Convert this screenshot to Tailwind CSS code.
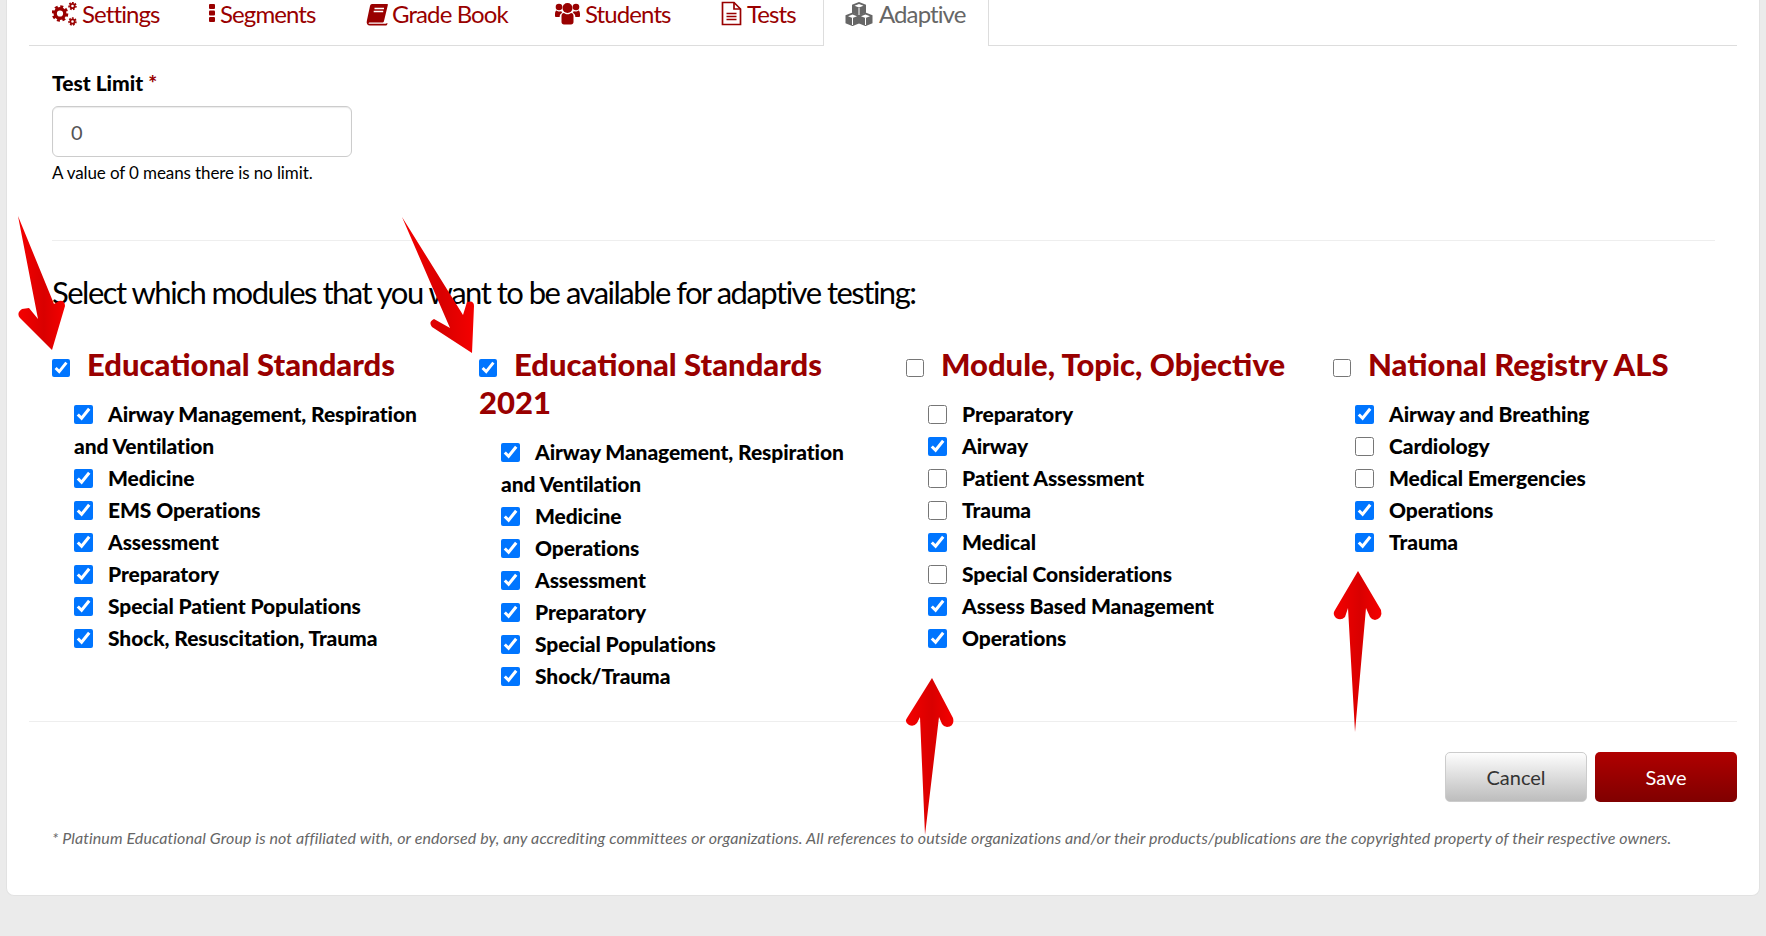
<!DOCTYPE html>
<html lang="en">
<head>
<meta charset="UTF-8" />
<title>Adaptive</title>
<script src="https://cdn.jsdelivr.net/npm/@tailwindcss/browser@4"></script>
</head>
<body class="bg-[#ebebeb] font-['Lato','Noto_Sans',sans-serif] h-[936px] overflow-hidden relative text-black">

<div class="ml-[6px] mr-[6px] h-[896px] bg-white border border-[#e2e2e2] border-t-0 rounded-b-lg pl-[22px] pr-[22px]">

  <!-- tabs -->
  <ul class="flex h-[46px] border-b border-[#dddddd] text-[#990000] text-[24px] tracking-[-0.9px] pl-[23px]">
    <li class="flex items-start gap-[5px] w-[157px] leading-[28px]">
      <svg viewBox="0 0 25 24" class="w-[25px] h-[24px] mt-[2px]" fill="none" stroke="#990000"><circle cx="8" cy="11.500" r="4.800" stroke-width="3.400"/><circle cx="8" cy="11.500" r="7" stroke-width="2.600" stroke-dasharray="3 2.500"/><circle cx="20.500" cy="4" r="2.200" stroke-width="1.800"/><circle cx="20.500" cy="4" r="3.500" stroke-width="1.500" stroke-dasharray="1.800 1.300"/><circle cx="20.500" cy="19.500" r="2.200" stroke-width="1.800"/><circle cx="20.500" cy="19.500" r="3.500" stroke-width="1.500" stroke-dasharray="1.800 1.300"/></svg>
      <span>Settings</span>
    </li>
    <li class="flex items-start gap-[5px] w-[157px] leading-[28px]">
      <svg viewBox="0 0 6 24" class="w-[6px] h-[24px] mt-[2px] fill-[#990000]"><rect y="2" width="6" height="5" rx="1"/><rect y="8.500" width="6" height="5" rx="1"/><rect y="15" width="6" height="5" rx="1"/></svg>
      <span>Segments</span>
    </li>
    <li class="flex items-start gap-[4px] w-[189px] leading-[28px]">
      <svg viewBox="0 0 22 24" class="w-[22px] h-[24px] mt-[2px]"><path d="M6 2h15c.8 0 1 .5.8 1.200L18 19c-.3 1-.8 1.500-2 1.500H4c-1 0-1.500.5-1.300 1.200h16.800l2-.7-.3 1.500c-.2.600-.6 1-1.300 1H4c-2.500 0-3.800-2-3.200-4.500L4 4c.3-1.200 1-2 2-2z" fill="#990000"/><path d="M8.500 6.500h9.500M7.700 9.500h9.500" stroke="#fff" stroke-width="1.300"/></svg>
      <span>Grade Book</span>
    </li>
    <li class="flex items-start gap-[5px] w-[166px] leading-[28px]">
      <svg viewBox="0 0 25 24" class="w-[25px] h-[24px] mt-[1px] fill-[#990000]"><circle cx="12.500" cy="7" r="5"/><circle cx="4" cy="6" r="3.300"/><circle cx="21" cy="6" r="3.300"/><path d="M6.500 15c0-2 1-3 2.500-3 1 .8 2.200 1.300 3.500 1.300s2.500-.5 3.500-1.300c1.500 0 2.500 1 2.500 3v6c0 1.500-1 2.500-2.500 2.500H9c-1.500 0-2.500-1-2.500-2.500z"/><path d="M0 13c0-2 .8-3.500 1.500-3.500 1 .8 1.800 1 2.700 1s1.500-.3 2-.6c.2.800.5 1.200 1 1.800-1.500.8-2.500 2-2.500 3.800v.5H1c-.5 0-1-.5-1-1z"/><path d="M25 13c0-2-.8-3.500-1.500-3.500-1 .8-1.800 1-2.700 1s-1.500-.3-2-.6c-.2.800-.5 1.200-1 1.800 1.500.8 2.500 2 2.500 3.800v.5H24c.5 0 1-.5 1-1z"/></svg>
      <span>Students</span>
    </li>
    <li class="flex items-start gap-[5px] w-[102px] leading-[28px]">
      <svg viewBox="0 0 21 25" class="w-[21px] h-[25px] mt-[1px]" fill="none" stroke="#990000" stroke-width="1.700"><path d="M1.500 1.500h11.500l6.500 6.500v15.500h-18z"/><path d="M13 1.500v6.500h6.500" /><path d="M5.500 12.500h10M5.500 15.500h10M5.500 18.500h10" stroke-width="1.500"/></svg>
      <span>Tests</span>
    </li>
    <li class="flex items-start gap-[6px] w-[166px] -mb-px h-[46px] bg-white border-x border-[#dddddd] pl-[21px] text-[#666666] leading-[28px]">
      <svg viewBox="0 0 28 24" class="w-[28px] h-[24px] mt-[2px]"><path d="M14 0l7 2.800v8L14 13.600 7 10.800v-8z" fill="#666"/><path d="M7.500 10.500l7 2.800v8l-7 2.800-7-2.800v-8z" fill="#666"/><path d="M20.500 10.500l7 2.800v8l-7 2.800-7-2.800v-8z" fill="#666"/><path d="M14 2l4.500 1.700L14 5.400 9.500 3.700zM7.500 12.500l4.500 1.700-4.500 1.700L3 14.200zM20.500 12.500l4.500 1.700-4.500 1.700L16 14.200z" fill="#fff"/><path d="M14 6v7M7.500 16v7M20.500 16v7" stroke="#fff" stroke-width="1"/></svg>
      <span>Adaptive</span>
    </li>
  </ul>

  <!-- test limit -->
  <div class="pl-[23px] pt-[23px]">
    <label class="block text-[21px] leading-[28px] font-black">Test Limit <span class="text-[#990000]">*</span></label>
    <input type="text" value="0" class="block mt-[9px] w-[300px] h-[51px] border border-[#cccccc] rounded-[6px] px-[18px] text-[20px] text-[#555555] shadow-[inset_0_1px_1px_rgba(0,0,0,0.08)]" />
    <p class="mt-[4px] text-[17px] leading-[24px] tracking-[-0.1px]">A value of 0 means there is no limit.</p>
  </div>

  <hr class="ml-[23px] mr-[22px] mt-[55px] border-[#eeeeee]" />

  <h3 class="pl-[23px] mt-[29px] text-[31px] leading-[44px] tracking-[-1.500px]">Select which modules that you want to be available for adaptive testing:</h3>

  <!-- module columns -->
  <div class="grid grid-cols-4 mt-[31px] h-[376px]">
    <div class="pl-[23px] pr-[20px]">
      <h2 class="text-[31px] leading-[38px] font-black text-[#990000]"><input type="checkbox" checked class="w-[18px] h-[18px] mr-[17px] accent-[#0075ff] align-[-1px]" />Educational Standards</h2>
      <ul class="mt-[15px] ml-[22px] text-[21px] leading-[32px] font-black tracking-[-0.1px]">
        <li><input type="checkbox" checked class="w-[19px] h-[19px] mr-[15px] accent-[#0075ff] align-[-2px]" />Airway Management, Respiration and Ventilation</li>
        <li><input type="checkbox" checked class="w-[19px] h-[19px] mr-[15px] accent-[#0075ff] align-[-2px]" />Medicine</li>
        <li><input type="checkbox" checked class="w-[19px] h-[19px] mr-[15px] accent-[#0075ff] align-[-2px]" />EMS Operations</li>
        <li><input type="checkbox" checked class="w-[19px] h-[19px] mr-[15px] accent-[#0075ff] align-[-2px]" />Assessment</li>
        <li><input type="checkbox" checked class="w-[19px] h-[19px] mr-[15px] accent-[#0075ff] align-[-2px]" />Preparatory</li>
        <li><input type="checkbox" checked class="w-[19px] h-[19px] mr-[15px] accent-[#0075ff] align-[-2px]" />Special Patient Populations</li>
        <li><input type="checkbox" checked class="w-[19px] h-[19px] mr-[15px] accent-[#0075ff] align-[-2px]" />Shock, Resuscitation, Trauma</li>
      </ul>
    </div>
    <div class="pl-[23px] pr-[20px]">
      <h2 class="text-[31px] leading-[38px] font-black text-[#990000]"><input type="checkbox" checked class="w-[18px] h-[18px] mr-[17px] accent-[#0075ff] align-[-1px]" />Educational Standards 2021</h2>
      <ul class="mt-[15px] ml-[22px] text-[21px] leading-[32px] font-black tracking-[-0.1px]">
        <li><input type="checkbox" checked class="w-[19px] h-[19px] mr-[15px] accent-[#0075ff] align-[-2px]" />Airway Management, Respiration and Ventilation</li>
        <li><input type="checkbox" checked class="w-[19px] h-[19px] mr-[15px] accent-[#0075ff] align-[-2px]" />Medicine</li>
        <li><input type="checkbox" checked class="w-[19px] h-[19px] mr-[15px] accent-[#0075ff] align-[-2px]" />Operations</li>
        <li><input type="checkbox" checked class="w-[19px] h-[19px] mr-[15px] accent-[#0075ff] align-[-2px]" />Assessment</li>
        <li><input type="checkbox" checked class="w-[19px] h-[19px] mr-[15px] accent-[#0075ff] align-[-2px]" />Preparatory</li>
        <li><input type="checkbox" checked class="w-[19px] h-[19px] mr-[15px] accent-[#0075ff] align-[-2px]" />Special Populations</li>
        <li><input type="checkbox" checked class="w-[19px] h-[19px] mr-[15px] accent-[#0075ff] align-[-2px]" />Shock/Trauma</li>
      </ul>
    </div>
    <div class="pl-[23px] pr-[20px]">
      <h2 class="text-[31px] leading-[38px] font-black text-[#990000]"><input type="checkbox" class="w-[18px] h-[18px] mr-[17px] accent-[#0075ff] align-[-1px]" />Module, Topic, Objective</h2>
      <ul class="mt-[15px] ml-[22px] text-[21px] leading-[32px] font-black tracking-[-0.1px]">
        <li><input type="checkbox" class="w-[19px] h-[19px] mr-[15px] accent-[#0075ff] align-[-2px]" />Preparatory</li>
        <li><input type="checkbox" checked class="w-[19px] h-[19px] mr-[15px] accent-[#0075ff] align-[-2px]" />Airway</li>
        <li><input type="checkbox" class="w-[19px] h-[19px] mr-[15px] accent-[#0075ff] align-[-2px]" />Patient Assessment</li>
        <li><input type="checkbox" class="w-[19px] h-[19px] mr-[15px] accent-[#0075ff] align-[-2px]" />Trauma</li>
        <li><input type="checkbox" checked class="w-[19px] h-[19px] mr-[15px] accent-[#0075ff] align-[-2px]" />Medical</li>
        <li><input type="checkbox" class="w-[19px] h-[19px] mr-[15px] accent-[#0075ff] align-[-2px]" />Special Considerations</li>
        <li><input type="checkbox" checked class="w-[19px] h-[19px] mr-[15px] accent-[#0075ff] align-[-2px]" />Assess Based Management</li>
        <li><input type="checkbox" checked class="w-[19px] h-[19px] mr-[15px] accent-[#0075ff] align-[-2px]" />Operations</li>
      </ul>
    </div>
    <div class="pl-[23px] pr-[20px]">
      <h2 class="text-[31px] leading-[38px] font-black text-[#990000]"><input type="checkbox" class="w-[18px] h-[18px] mr-[17px] accent-[#0075ff] align-[-1px]" />National Registry ALS</h2>
      <ul class="mt-[15px] ml-[22px] text-[21px] leading-[32px] font-black tracking-[-0.1px]">
        <li><input type="checkbox" checked class="w-[19px] h-[19px] mr-[15px] accent-[#0075ff] align-[-2px]" />Airway and Breathing</li>
        <li><input type="checkbox" class="w-[19px] h-[19px] mr-[15px] accent-[#0075ff] align-[-2px]" />Cardiology</li>
        <li><input type="checkbox" class="w-[19px] h-[19px] mr-[15px] accent-[#0075ff] align-[-2px]" />Medical Emergencies</li>
        <li><input type="checkbox" checked class="w-[19px] h-[19px] mr-[15px] accent-[#0075ff] align-[-2px]" />Operations</li>
        <li><input type="checkbox" checked class="w-[19px] h-[19px] mr-[15px] accent-[#0075ff] align-[-2px]" />Trauma</li>
      </ul>
    </div>
  </div>

  <hr class="border-[#eeeeee]" />

  <div class="flex justify-end gap-[8px] mt-[30px]">
    <button class="w-[142px] h-[50px] rounded-[5px] border border-[#cccccc] bg-gradient-to-b from-[#fdfdfd] to-[#bdbdbd] text-[20px] text-[#333333]">Cancel</button>
    <button class="w-[142px] h-[50px] rounded-[5px] bg-gradient-to-b from-[#b00000] to-[#800000] text-[20px] text-white">Save</button>
  </div>

  <p class="pl-[23px] mt-[24px] text-[16px] leading-[24px] italic text-[#666666] tracking-[0.1px]">* Platinum Educational Group is not affiliated with, or endorsed by, any accrediting committees or organizations. All references to outside organizations and/or their products/publications are the copyrighted property of their respective owners.</p>
</div>

<!-- red annotation arrows -->
<svg class="absolute left-0 top-0 w-[1766px] h-[936px] pointer-events-none" viewBox="0 0 1766 936">
  <defs>
    <linearGradient id="redA" x1="0" y1="0" x2="1" y2="0"><stop offset="0" stop-color="#f50000"/><stop offset="0.55" stop-color="#d90000"/><stop offset="1" stop-color="#f50000"/></linearGradient>
  </defs>
  <path fill="url(#redA)" d="M18 216L54 304 59 301Q65 300 65 306L52 350 20 318Q16 313 22 309L29 308 38 319z"/>
  <path fill="url(#redA)" d="M402 217L463 315 467 302Q474 300 474 306L472 353 432 327Q428 322 434 319L450 328z"/>
  <path fill="url(#redA)" d="M932 678L953 718Q955 726 947 727Q944 727 942 724L939 717 925 835 920 717 917 723Q914 727 909 725Q904 722 907 718z"/>
  <path fill="url(#redA)" d="M1358 571L1381 610Q1383 618 1375 620Q1372 620 1370 617L1366 608 1355 732 1348 608 1345 617Q1341 621 1336 618Q1332 614 1335 610z"/>
</svg>

</body>
</html>
